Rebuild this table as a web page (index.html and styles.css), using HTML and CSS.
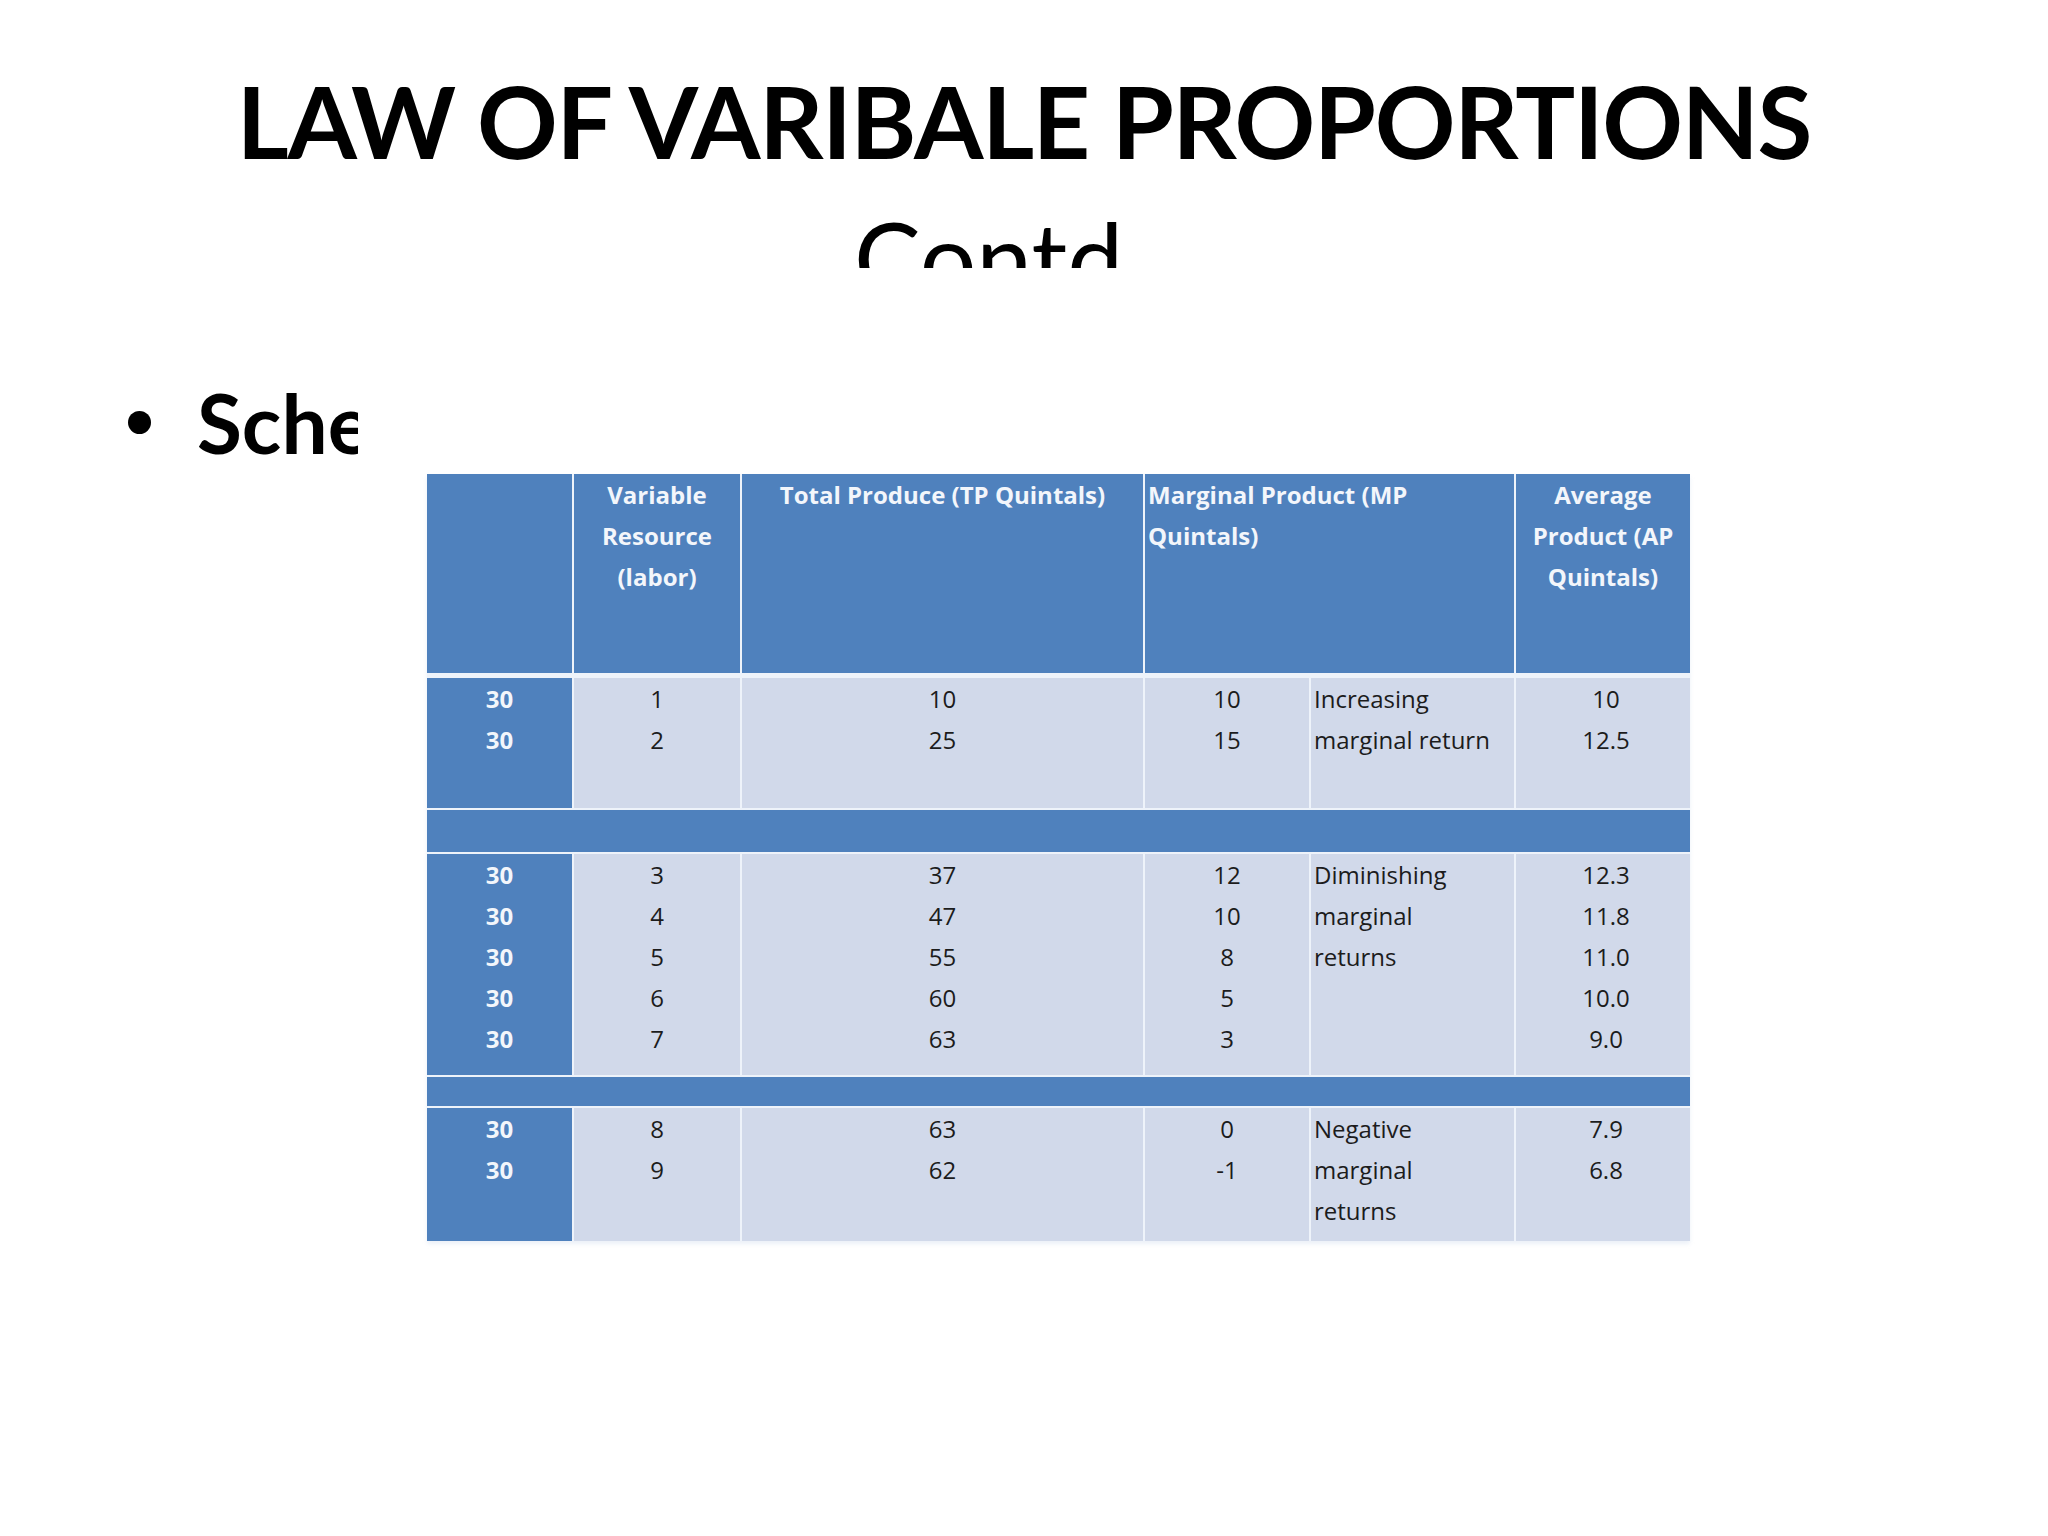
FILE: index.html
```html
<!DOCTYPE html>
<html lang="en">
<head>
<meta charset="utf-8">
<title>Law of Varibale Proportions</title>
<link rel="stylesheet" href="styles.css">
</head>
<body>
<div class="slide">
  <h1 class="title">LAW OF VARIBALE PROPORTIONS<br><span class="contd">Contd...</span></h1>

  <div class="bullet-row">
    <span class="dot"></span>
    <span class="bullet-text">Schedule</span>
  </div>

  <div class="table">
    <div class="th"></div>
    <div class="th">Variable<br>Resource<br>(labor)</div>
    <div class="th">Total Produce (TP Quintals)</div>
    <div class="th th-left span2">Marginal Product (MP<br>Quintals)</div>
    <div class="th">Average<br>Product (AP<br>Quintals)</div>

    <div class="c1">30<br>30</div>
    <div class="td">1<br>2</div>
    <div class="td">10<br>25</div>
    <div class="td">10<br>15</div>
    <div class="td td-left">Increasing<br>marginal return</div>
    <div class="td td-ap">10<br>12.5</div>

    <div class="band"></div>

    <div class="c1">30<br>30<br>30<br>30<br>30</div>
    <div class="td">3<br>4<br>5<br>6<br>7</div>
    <div class="td">37<br>47<br>55<br>60<br>63</div>
    <div class="td">12<br>10<br>8<br>5<br>3</div>
    <div class="td td-left">Diminishing<br>marginal<br>returns</div>
    <div class="td td-ap">12.3<br>11.8<br>11.0<br>10.0<br>9.0</div>

    <div class="band"></div>

    <div class="c1">30<br>30</div>
    <div class="td">8<br>9</div>
    <div class="td">63<br>62</div>
    <div class="td">0<br>-1</div>
    <div class="td td-left">Negative<br>marginal<br>returns</div>
    <div class="td td-ap">7.9<br>6.8</div>
  </div>
</div>
</body>
</html>
```

FILE: styles.css
```css
html, body {
  margin: 0;
  padding: 0;
  background: #ffffff;
}

.slide {
  width: 2048px;
  height: 1536px;
  overflow: hidden;
  background: #ffffff;
  color: #000000;
}

.title {
  margin: 52px 0 0 0;
  height: 216px;
  overflow: hidden;
  text-align: center;
  font-family: "Lato", "Open Sans", sans-serif;
  font-weight: 700;
  font-size: 100px;
  line-height: 137px;
  letter-spacing: -1.3px;
}

.contd {
  font-weight: 400;
  letter-spacing: 0;
}

.bullet-row {
  margin-top: 104px;
  height: 100px;
  display: flex;
  align-items: center;
  padding-left: 128px;
}

.dot {
  width: 23px;
  height: 23px;
  border-radius: 50%;
  background: #000;
  flex: 0 0 auto;
}

.bullet-text {
  margin-left: 46px;
  width: 161px;
  overflow: hidden;
  white-space: nowrap;
  font-family: "Lato", "Open Sans", sans-serif;
  font-weight: 700;
  font-size: 82px;
  line-height: 100px;
}

.table {
  margin: 2px 0 0 427px;
  width: 1263px;
  display: grid;
  grid-template-columns: 145px 166px 401px 164px 203px 174px;
  grid-template-rows: 202px 130px 42px 221px 29px 133px;
  column-gap: 2px;
  row-gap: 2px;
  background: #eef3fa;
  font-family: "Open Sans", "Lato", sans-serif;
  font-size: 24px;
  line-height: 41px;
  box-shadow: 0 3px 4px rgba(200, 215, 235, 0.35);
}

.th {
  background: #4f81bd;
  color: #f3f6fb;
  font-weight: 700;
  text-align: center;
  margin-bottom: 3px;
}

.th-left {
  text-align: left;
  padding-left: 3px;
}

.span2 {
  grid-column: span 2;
}

.c1 {
  background: #4f81bd;
  color: #f3f6fb;
  font-weight: 700;
  text-align: center;
}

.td {
  background: #d1d9ea;
  color: #1c1c1c;
  text-align: center;
}

.td-ap {
  padding-left: 6px;
}

.td-left {
  text-align: left;
  padding-left: 3px;
}

.band {
  grid-column: 1 / -1;
  background: #4f81bd;
}
```
